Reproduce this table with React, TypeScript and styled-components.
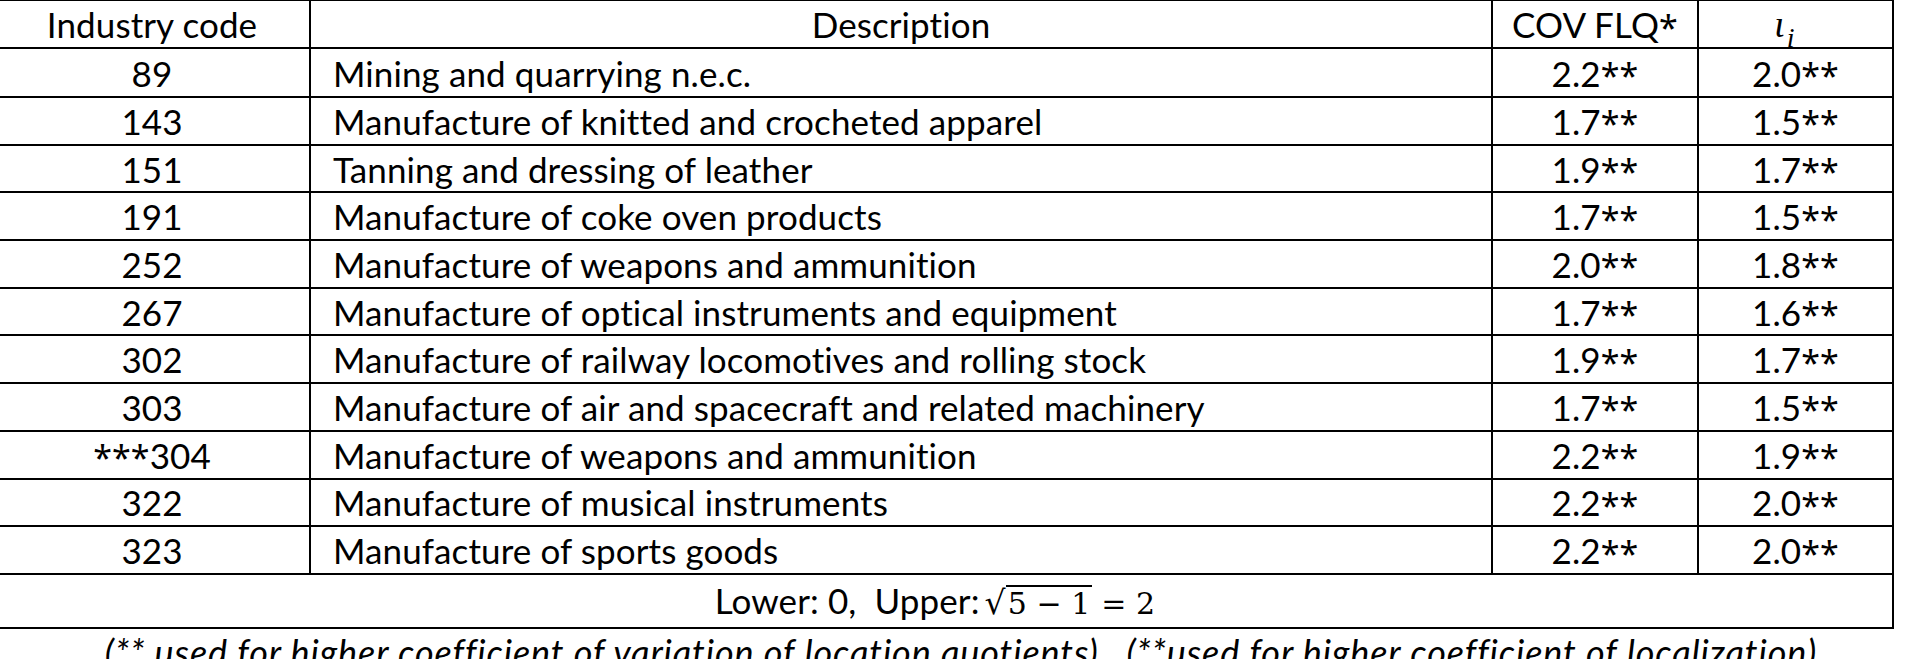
import React from "react";
import styled, { createGlobalStyle } from "styled-components";

const GlobalStyle = createGlobalStyle`
  html, body {
    margin: 0;
    padding: 0;
    background: #ffffff;
    overflow: hidden;
  }
  body {
    font-family: Lato, "Noto Sans", sans-serif;
    color: #000000;
  }
`;

const Page = styled.div`
  width: 1922px;
  height: 659px;
  overflow: hidden;
  background: #ffffff;
`;

const Table = styled.div`
  display: grid;
  grid-template-columns: 316px 1182px 206px 195px;
  grid-template-rows: 48px 49px repeat(10, 47.7px) 54px;
  width: max-content;
  margin: -1px 0 0 -7px;
  border-top: 2px solid #000;
  border-left: 2px solid #000;
  font-family: Lato, "Noto Sans", sans-serif;
  font-size: 35px;
  letter-spacing: 0.1px;
  color: #000;
`;

const Cell = styled.div<{ $align?: "left" | "center"; $span?: number }>`
  box-sizing: border-box;
  display: flex;
  align-items: center;
  justify-content: ${(p) => (p.$align === "left" ? "flex-start" : "center")};
  padding: ${(p) => (p.$align === "left" ? "1px 0 0 22px" : "1px 0 0 0")};
  border-right: 2px solid #000;
  border-bottom: 2px solid #000;
  white-space: nowrap;
  line-height: 1;
  ${(p) => (p.$span ? `grid-column: span ${p.$span};` : "")}
`;

const Star = styled.span`
  font-family: "Noto Sans", "DejaVu Sans", sans-serif;
  font-size: 34px;
  position: relative;
  top: 2px;
`;

const MathLabel = styled.span`
  font-family: "Liberation Serif", "DejaVu Serif", serif;
  font-style: italic;
  font-size: 37px;
  line-height: 1;
  margin-right: 22px;
`;

const MathSub = styled.span`
  font-size: 28px;
  line-height: 0;
  vertical-align: -10px;
  margin-left: 2px;
`;

const Formula = styled.span`
  display: inline-flex;
  align-items: baseline;
  padding-right: 17px;
`;

const MathText = styled.span`
  font-family: "DejaVu Serif", "Liberation Serif", serif;
  font-size: 30px;
`;

const Radical = styled.span`
  font-family: "DejaVu Sans", "Liberation Sans", sans-serif;
  font-size: 33px;
  margin-left: 5px;
`;

const Overline = styled.span`
  border-top: 2px solid #000;
  padding: 2px 1px 0 2px;
  font-family: "DejaVu Serif", "Liberation Serif", serif;
  font-size: 30px;
`;

const Footnote = styled.div`
  width: 1922px;
  text-align: center;
  font-family: Lato, "Noto Sans", sans-serif;
  font-style: italic;
  font-size: 36px;
  letter-spacing: 0.9px;
  line-height: 40px;
  padding-top: 3px;
  white-space: pre;
`;

function Stars({ text }: { text: string }) {
  const parts = text.split(/(\*+)/).filter((s) => s.length > 0);
  return (
    <>
      {parts.map((p, i) =>
        p.startsWith("*") ? <Star key={i}>{p}</Star> : <React.Fragment key={i}>{p}</React.Fragment>
      )}
    </>
  );
}

type Row = { code: string; desc: string; cov: string; li: string };

const rows: Row[] = [
  { code: "89", desc: "Mining and quarrying n.e.c.", cov: "2.2**", li: "2.0**" },
  { code: "143", desc: "Manufacture of knitted and crocheted apparel", cov: "1.7**", li: "1.5**" },
  { code: "151", desc: "Tanning and dressing of leather", cov: "1.9**", li: "1.7**" },
  { code: "191", desc: "Manufacture of coke oven products", cov: "1.7**", li: "1.5**" },
  { code: "252", desc: "Manufacture of weapons and ammunition", cov: "2.0**", li: "1.8**" },
  { code: "267", desc: "Manufacture of optical instruments and equipment", cov: "1.7**", li: "1.6**" },
  { code: "302", desc: "Manufacture of railway locomotives and rolling stock", cov: "1.9**", li: "1.7**" },
  { code: "303", desc: "Manufacture of air and spacecraft and related machinery", cov: "1.7**", li: "1.5**" },
  { code: "***304", desc: "Manufacture of weapons and ammunition", cov: "2.2**", li: "1.9**" },
  { code: "322", desc: "Manufacture of musical instruments", cov: "2.2**", li: "2.0**" },
  { code: "323", desc: "Manufacture of sports goods", cov: "2.2**", li: "2.0**" },
];

export default function App() {
  return (
    <Page>
      <GlobalStyle />
      <Table>
        <Cell>Industry code</Cell>
        <Cell>Description</Cell>
        <Cell>
          <Stars text="COV FLQ*" />
        </Cell>
        <Cell>
          <MathLabel>
            ι<MathSub>i</MathSub>
          </MathLabel>
        </Cell>
        {rows.map((r, i) => (
          <React.Fragment key={i}>
            <Cell>
              <Stars text={r.code} />
            </Cell>
            <Cell $align="left">{r.desc}</Cell>
            <Cell>
              <Stars text={r.cov} />
            </Cell>
            <Cell>
              <Stars text={r.li} />
            </Cell>
          </React.Fragment>
        ))}
        <Cell $span={4}>
          <Formula>
            <span>Lower: 0,&nbsp; Upper:</span>
            <Radical>√</Radical>
            <Overline>5 − 1</Overline>
            <MathText>&nbsp;= 2</MathText>
          </Formula>
        </Cell>
      </Table>
      <Footnote>
        {"(** used for higher coefficient of variation of location quotients),  (**used for higher coefficient of localization)"}
      </Footnote>
    </Page>
  );
}
